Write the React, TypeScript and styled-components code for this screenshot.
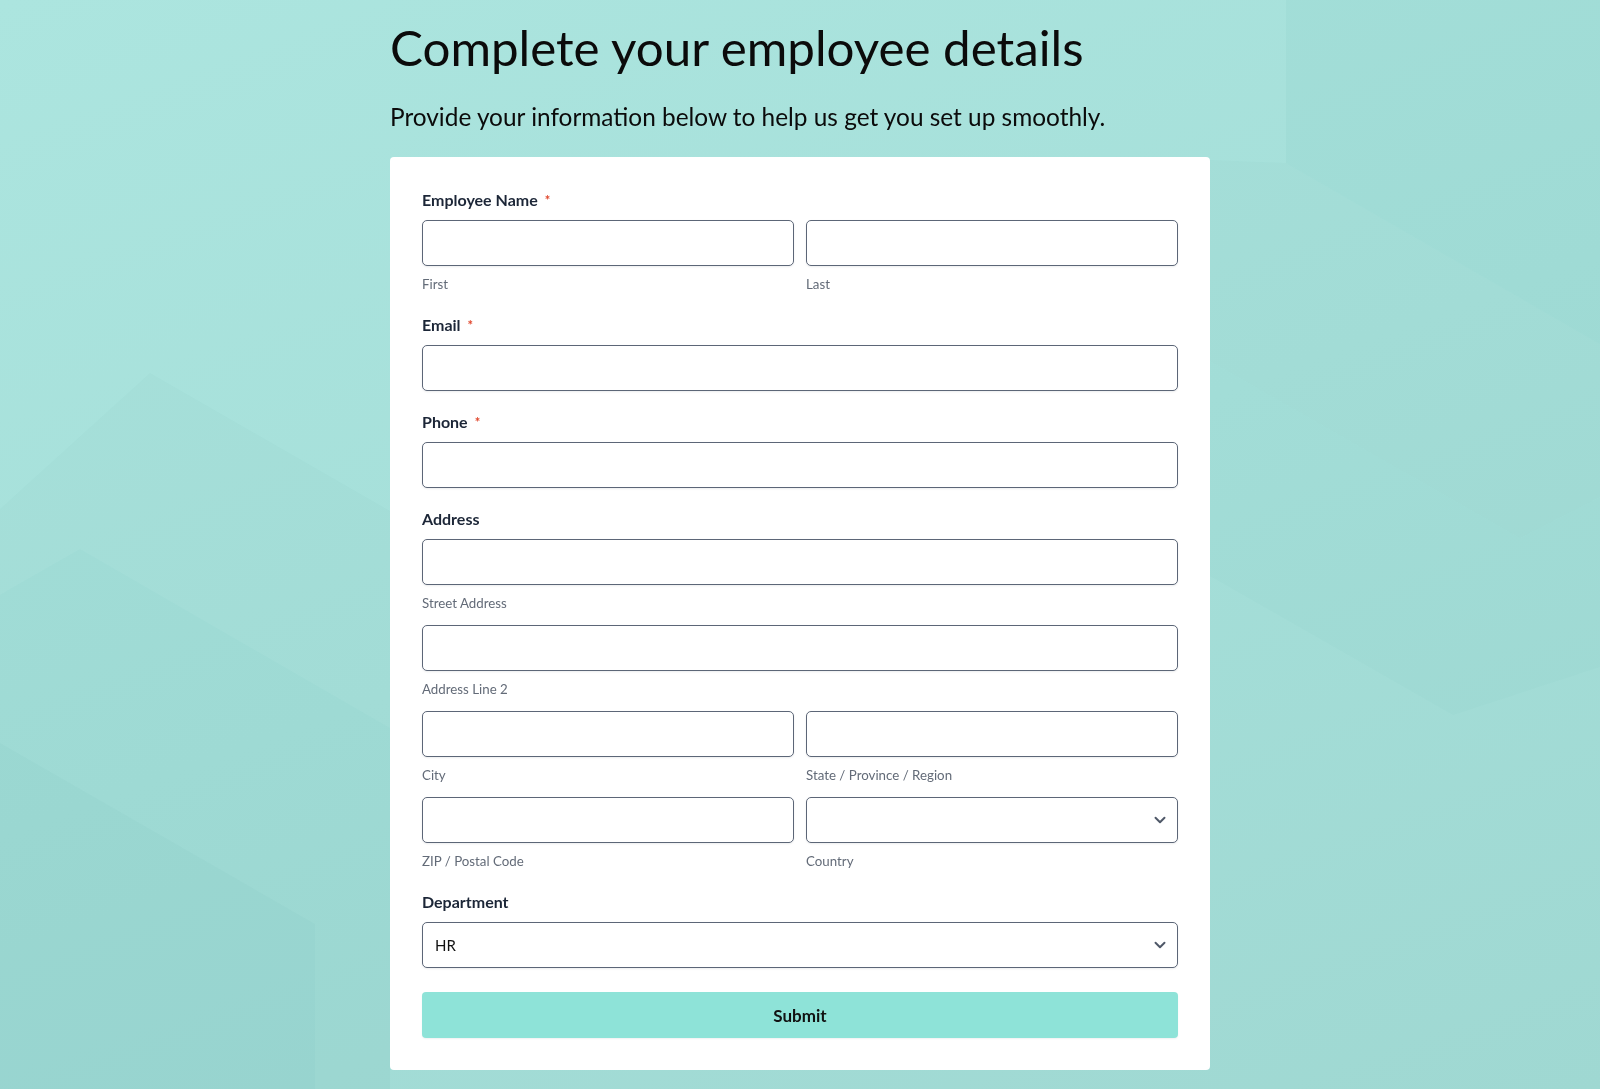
import styled, { createGlobalStyle } from 'styled-components';
import { ChevronDown } from 'lucide-react';

const GlobalStyle = createGlobalStyle`
    html, body {
        margin: 0;
        padding: 0;
    }
    body {
        background: linear-gradient(160deg, #ace5df 0%, #a5dfd9 50%, #9fd8d2 100%);
        font-family: Lato, "Noto Sans", "Liberation Sans", sans-serif;
        color: #111;
        min-height: 100vh;
    }
    * {
        box-sizing: border-box;
    }
`;

const Backdrop = styled.svg`
    position: fixed;
    inset: 0;
    width: 100%;
    height: 100%;
    z-index: -1;
    pointer-events: none;
`;

const Page = styled.main`
    display: flex;
    justify-content: center;
    padding: 18px 0 19px;
`;

const Container = styled.div`
    width: 820px;
    display: flex;
    flex-direction: column;
`;

const Title = styled.h1`
    margin: 0 0 26px;
    font-size: 49.3px;
    line-height: 58px;
    font-weight: 400;
    color: #0b0b0b;
`;

const Subtitle = styled.p`
    margin: 0 0 26px;
    font-size: 24.4px;
    line-height: 29px;
    font-weight: 400;
    color: #0b0b0b;
`;

const Card = styled.form`
    background: #ffffff;
    border-radius: 4px;
    padding: 32px;
    display: flex;
    flex-direction: column;
    gap: 20px;
`;

const Section = styled.div`
    display: flex;
    flex-direction: column;
`;

const FieldLabel = styled.label`
    font-size: 16px;
    line-height: 22px;
    font-weight: 700;
    color: #1c2637;
    margin-bottom: 9px;
    display: flex;
    align-items: center;
`;

const Required = styled.span`
    color: #e0452b;
    font-size: 13px;
    margin-left: 7px;
`;

const Rows = styled.div`
    display: flex;
    flex-direction: column;
    gap: 12px;
`;

const Row = styled.div<{ $cols?: number }>`
    display: grid;
    grid-template-columns: repeat(${(p) => p.$cols ?? 1}, 1fr);
    gap: 12px;
`;

const Field = styled.div`
    display: flex;
    flex-direction: column;
`;

const TextInput = styled.input`
    height: 46px;
    width: 100%;
    border: 1px solid #5c6677;
    border-radius: 5px;
    background: #fff;
    box-shadow: 0 1px 2px rgba(15, 23, 42, 0.08);
    padding: 0 12px;
    font-family: inherit;
    font-size: 15px;
    color: #111;
    outline: none;
`;

const SelectWrap = styled.div`
    position: relative;
`;

const Select = styled.select`
    appearance: none;
    -webkit-appearance: none;
    height: 46px;
    width: 100%;
    border: 1px solid #5c6677;
    border-radius: 5px;
    background: #fff;
    box-shadow: 0 1px 2px rgba(15, 23, 42, 0.08);
    padding: 0 36px 0 12px;
    font-family: inherit;
    font-size: 15px;
    color: #111;
    outline: none;
`;

const Chevron = styled(ChevronDown)`
    position: absolute;
    right: 9px;
    top: 50%;
    transform: translateY(-50%);
    color: #4f5868;
    pointer-events: none;
`;

const SubLabel = styled.span`
    margin-top: 8px;
    font-size: 13.3px;
    line-height: 20px;
    color: #636b78;
`;

const SubmitButton = styled.button`
    margin-top: 4px;
    height: 46px;
    width: 100%;
    border: none;
    border-radius: 4px;
    background: #8ee3d8;
    box-shadow: 0 1px 2px rgba(15, 23, 42, 0.06);
    font-family: inherit;
    font-size: 17px;
    font-weight: 700;
    color: #111;
    cursor: pointer;
`;

function TextField({ sub }: { sub?: string }) {
    return (
        <Field>
            <TextInput type="text" />
            {sub && <SubLabel>{sub}</SubLabel>}
        </Field>
    );
}

function SelectField({ sub, value, options }: { sub?: string; value?: string; options: string[] }) {
    return (
        <Field>
            <SelectWrap>
                <Select defaultValue={value ?? ''}>
                    {options.map((o) => (
                        <option key={o} value={o}>
                            {o}
                        </option>
                    ))}
                </Select>
                <Chevron size={18} strokeWidth={2.6} />
            </SelectWrap>
            {sub && <SubLabel>{sub}</SubLabel>}
        </Field>
    );
}

function Background() {
    return (
        <Backdrop viewBox="0 0 1600 1089" preserveAspectRatio="none">
            <g fill="#2f8f86">
                <polygon points="0,509 150,373 390,511 390,1089 0,1089" opacity="0.025" />
                <polygon points="10,589 80,549 390,728 390,1089 0,1089 0,595" opacity="0.025" />
                <polygon points="0,743 315,924 315,1089 0,1089" opacity="0.035" />
                <polygon points="1286,0 1600,0 1600,344 1286,163" opacity="0.045" />
                <polygon points="1210,361 1520,538 1600,497 1600,344 1286,163 1210,160" opacity="0.025" />
                <polygon points="1210,576 1453,715 1600,667 1600,497 1520,538 1210,361" opacity="0.02" />
            </g>
        </Backdrop>
    );
}

export default function App() {
    return (
        <>
            <GlobalStyle />
            <Background />
            <Page>
                <Container>
                    <Title>Complete your employee details</Title>
                    <Subtitle>Provide your information below to help us get you set up smoothly.</Subtitle>
                    <Card onSubmit={(e) => e.preventDefault()}>
                        <Section>
                            <FieldLabel>
                                Employee Name<Required>*</Required>
                            </FieldLabel>
                            <Row $cols={2}>
                                <TextField sub="First" />
                                <TextField sub="Last" />
                            </Row>
                        </Section>

                        <Section>
                            <FieldLabel>
                                Email<Required>*</Required>
                            </FieldLabel>
                            <TextField />
                        </Section>

                        <Section>
                            <FieldLabel>
                                Phone<Required>*</Required>
                            </FieldLabel>
                            <TextField />
                        </Section>

                        <Section>
                            <FieldLabel>Address</FieldLabel>
                            <Rows>
                                <TextField sub="Street Address" />
                                <TextField sub="Address Line 2" />
                                <Row $cols={2}>
                                    <TextField sub="City" />
                                    <TextField sub="State / Province / Region" />
                                </Row>
                                <Row $cols={2}>
                                    <TextField sub="ZIP / Postal Code" />
                                    <SelectField sub="Country" options={['', 'United States', 'Canada', 'United Kingdom']} />
                                </Row>
                            </Rows>
                        </Section>

                        <Section>
                            <FieldLabel>Department</FieldLabel>
                            <SelectField value="HR" options={['HR', 'Engineering', 'Finance', 'Sales', 'Marketing']} />
                        </Section>

                        <SubmitButton type="submit">Submit</SubmitButton>
                    </Card>
                </Container>
            </Page>
        </>
    );
}
